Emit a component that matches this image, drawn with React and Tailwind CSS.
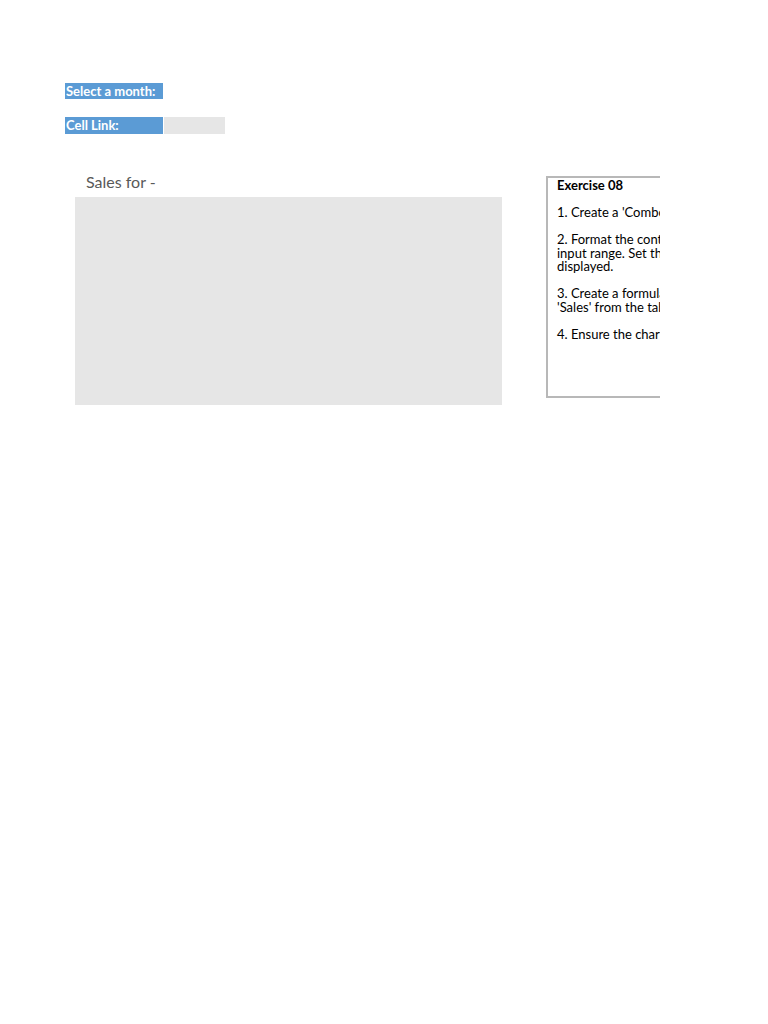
import React from "react";

const steps = [
  ["Exercise 08"],
  ["1. Create a 'Combo Box' form control next to the month cell."],
  [
    "2. Format the control so it uses the month list as the",
    "input range. Set the cell link and 12 drop down lines",
    "displayed.",
  ],
  [
    "3. Create a formula that looks up the month and returns",
    "'Sales' from the table for the chart.",
  ],
  ["4. Ensure the chart title updates with the month."],
];

export default function App() {
  return (
    <div className="min-h-screen bg-white font-['Lato','Open_Sans',sans-serif]">
      <div className="pl-[65px] pt-[83px]">
        {/* Inputs */}
        <div className="w-[98px] h-[16px] bg-[#5b9bd5] pl-[1px] text-[13px] leading-[16px] font-bold text-white whitespace-nowrap">
          Select a month:
        </div>
        <div className="mt-[18px] flex h-[17px]">
          <div className="w-[98px] bg-[#5b9bd5] pl-[1px] text-[13px] leading-[17px] font-bold text-white">
            Cell Link:
          </div>
          <div className="ml-[1px] w-[61px] bg-[#e6e6e6]" />
        </div>

        <div className="mt-[42px] flex">
          {/* Chart */}
          <div className="ml-[10px] w-[427px]">
            <div className="h-[21px] pl-[11px] text-[16px] leading-[12px] text-[#595959]">
              Sales for -
            </div>
            <div className="h-[208px] bg-[#e6e6e6]" />
          </div>

          {/* Exercise notes */}
          <div className="ml-[44px] w-[114px] overflow-hidden">
            <div className="w-[400px] h-[222px] border-2 border-r-0 border-[#b8b8b8] pl-[9px] pt-[1px] text-[13px] leading-[13.5px] text-black">
              {steps.map((lines, i) => (
                <div key={i} className={i === 0 ? "font-bold" : "mt-[13.5px]"}>
                  {lines.map((l, j) => (
                    <div key={j} className="whitespace-nowrap">
                      {l}
                    </div>
                  ))}
                </div>
              ))}
            </div>
          </div>
        </div>
      </div>
    </div>
  );
}
